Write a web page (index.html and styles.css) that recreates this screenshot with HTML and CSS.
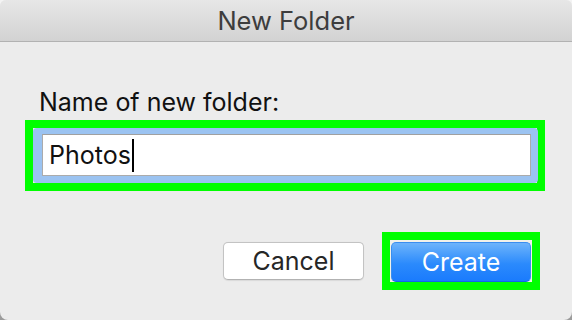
FILE: index.html
```html
<!DOCTYPE html>
<html>
<head>
<meta charset="utf-8">
<link rel="stylesheet" href="styles.css">
</head>
<body>
<div class="window">
  <div class="titlebar">New Folder</div>
  <div class="content">
    <div class="label">Name of new folder:</div>
    <div class="hl field-hl">
      <div class="focus-ring">
        <div class="field"><span class="value">Photos</span><span class="caret"></span></div>
      </div>
    </div>
    <div class="buttons">
      <button class="btn cancel">Cancel</button>
      <div class="hl btn-hl">
        <button class="btn create">Create</button>
      </div>
    </div>
  </div>
</div>
</body>
</html>
```

FILE: styles.css
```css
html, body {
  margin: 0;
  padding: 0;
}
html {
  background: linear-gradient(#f4f4f4, #f0f0f0 60%, #9a9a9a);
}
body {
  width: 572px;
  height: 320px;
  overflow: hidden;
  font-family: "Inter", "Liberation Sans", sans-serif;
}
.window {
  width: 572px;
  height: 320px;
  background: #ececec;
  border-radius: 6px 6px 8px 8px;
  overflow: hidden;
  display: flex;
  flex-direction: column;
}
.titlebar {
  height: 41px;
  border-bottom: 1px solid #b2b2b2;
  background: linear-gradient(#e7e7e7, #d2d2d2);
  display: flex;
  align-items: center;
  justify-content: center;
  font-size: 25.5px;
  color: #3d3d3d;
  flex: none;
}
.content {
  display: flex;
  flex-direction: column;
  padding: 46px 27px 0 25px;
}
.label {
  font-size: 25px;
  line-height: 28px;
  color: #111;
  margin-left: 14px;
}
.hl {
  border: 8px solid #00ff00;
  box-sizing: border-box;
}
.field-hl {
  width: 520px;
  height: 71px;
  margin-top: 4px;
}
.focus-ring {
  height: 55px;
  box-sizing: border-box;
  width: 505px;
  background: #9bc3f1;
  border-radius: 4px;
  padding: 6px 7px 7px 9px;
}
.field {
  height: 42px;
  box-sizing: border-box;
  background: #fff;
  border: 1px solid #ababab;
  border-top-color: #a0a0a0;
  display: flex;
  align-items: center;
  padding-left: 6px;
  font-size: 25px;
  color: #111;
}
.caret {
  display: inline-block;
  width: 2px;
  height: 33px;
  background: #000;
  margin-left: 1px;
}
.buttons {
  display: flex;
  justify-content: flex-end;
  align-items: center;
  gap: 18px;
  margin-top: 41px;
  padding-right: 5px;
}
.btn {
  font-family: inherit;
  font-size: 25px;
  margin: 0;
  box-sizing: border-box;
  border-radius: 5px;
  padding: 0;
}
.cancel {
  width: 141px;
  height: 38px;
  background: #fff;
  border: 1px solid #c3c3c3;
  border-bottom-color: #b2b2b2;
  color: #262626;
  box-shadow: 0 0.5px 1px rgba(0,0,0,0.08);
}
.btn-hl {
  width: 158px;
  height: 58px;
  padding: 2px 1px 0 1px;
  background: #f1f1ea;
}
.create {
  width: 140px;
  height: 40px;
  background: linear-gradient(#6db4fb, #2b8afc 55%, #1a7bfd);
  border: 1px solid #3a8ef0;
  border-bottom-color: #1266e6;
  color: #fff;
}
```
